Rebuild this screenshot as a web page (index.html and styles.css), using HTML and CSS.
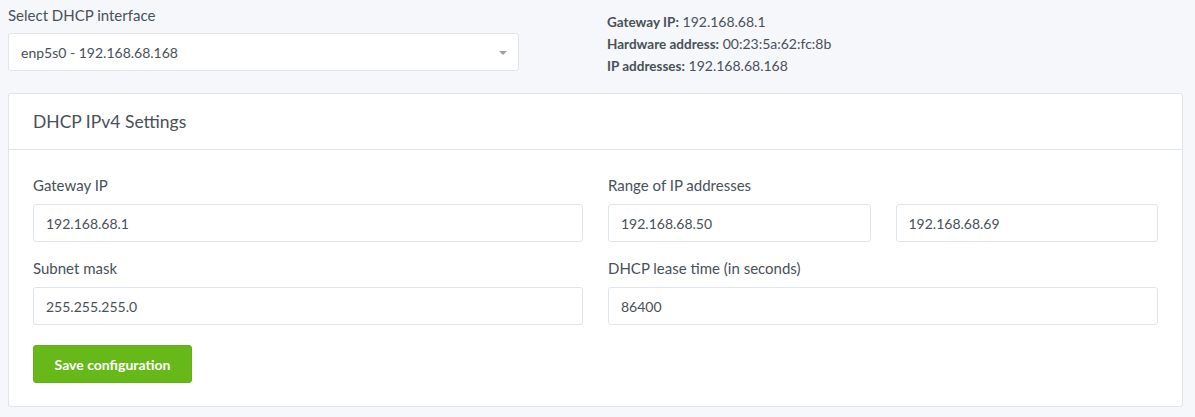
FILE: index.html
```html
<!DOCTYPE html>
<html>
<head>
<meta charset="utf-8">
<link rel="stylesheet" href="styles.css">
</head>
<body>
<div class="page">
  <div class="top">
    <div class="iface">
      <div class="label top-label">Select DHCP interface</div>
      <div class="select">
        <span>enp5s0 - 192.168.68.168</span>
        <span class="caret"></span>
      </div>
    </div>
    <div class="info">
      <div class="info-line"><b>Gateway IP:</b> 192.168.68.1</div>
      <div class="info-line"><b>Hardware address:</b> 00:23:5a:62:fc:8b</div>
      <div class="info-line"><b>IP addresses:</b> 192.168.68.168</div>
    </div>
  </div>
  <div class="card">
    <div class="card-header">DHCP IPv4 Settings</div>
    <div class="card-body">
      <div class="grid">
        <div class="field">
          <div class="label">Gateway IP</div>
          <div class="input">192.168.68.1</div>
        </div>
        <div class="field">
          <div class="label">Range of IP addresses</div>
          <div class="range">
            <div class="input">192.168.68.50</div>
            <div class="input">192.168.68.69</div>
          </div>
        </div>
        <div class="field">
          <div class="label">Subnet mask</div>
          <div class="input">255.255.255.0</div>
        </div>
        <div class="field">
          <div class="label">DHCP lease time (in seconds)</div>
          <div class="input">86400</div>
        </div>
      </div>
      <button class="btn">Save configuration</button>
    </div>
  </div>
</div>
</body>
</html>
```

FILE: styles.css
```css
* { box-sizing: border-box; }
html, body { margin: 0; padding: 0; }
body {
  background: #f5f7fb;
  font-family: "Lato", "Open Sans", sans-serif;
  font-size: 14px;
  color: #495057;
}
.page {
  padding: 0 12px 0 8px;
}
.top {
  display: flex;
  height: 93px;
}
.iface {
  width: 511px;
}
.top-label {
  padding-top: 5px;
  height: 33px;
  margin: 0;
}
.label {
  font-size: 15px;
  color: #495057;
  line-height: 20px;
}
.select {
  height: 38px;
  background: #fff;
  border: 1px solid #e0e5ec;
  border-radius: 3px;
  display: flex;
  align-items: center;
  justify-content: space-between;
  padding: 0 11px 0 12px;
  color: #495057;
}
.caret {
  width: 0; height: 0;
  border-left: 4px solid transparent;
  border-right: 4px solid transparent;
  border-top: 4px solid #9aa0ac;
  margin-top: 1px;
}
.info {
  margin-left: 88px;
  padding-top: 11px;
}
.info-line {
  line-height: 22px;
  font-size: 14px;
  color: #495057;
}
.info-line b {
  font-size: 13.5px;
  font-weight: 700;
}
.card {
  background: #fff;
  border: 1px solid rgba(0, 40, 100, 0.12);
  border-radius: 3px;
  height: 314px;
}
.card-header {
  height: 56px;
  border-bottom: 1px solid rgba(0, 40, 100, 0.12);
  padding: 0 24px;
  display: flex;
  align-items: center;
  font-size: 17.5px;
  color: #495057;
}
.card-body {
  padding: 25px 24px 24px;
}
.grid {
  display: grid;
  grid-template-columns: 550px 550px;
  column-gap: 25px;
  row-gap: 16px;
}
.field .label {
  margin-bottom: 9px;
}
.range {
  display: grid;
  grid-template-columns: 1fr 1fr;
  column-gap: 25px;
}
.input {
  height: 38px;
  border: 1px solid #e0e5ec;
  border-radius: 3px;
  background: #fff;
  display: flex;
  align-items: center;
  padding: 0 12px;
  color: #495057;
}
.btn {
  margin-top: 20px;
  background: #67b819;
  border: 1px solid #62b017;
  border-radius: 3px;
  color: #fff;
  font-family: inherit;
  font-weight: 700;
  font-size: 14px;
  height: 38px;
  padding: 0 19px;
  width: 159px;
}
```
